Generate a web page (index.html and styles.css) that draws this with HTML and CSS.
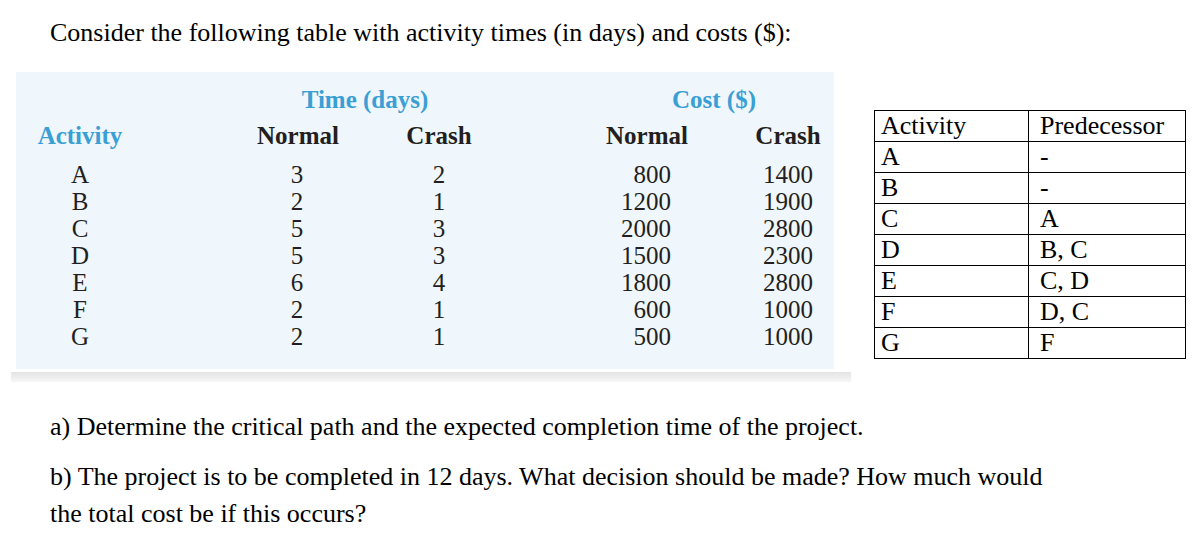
FILE: index.html
```html
<!DOCTYPE html>
<html lang="en">
<head>
<meta charset="utf-8">
<title>Activity times and costs</title>
<link rel="stylesheet" href="styles.css">
</head>
<body>
<main class="page">
  <p class="intro">Consider the following table with activity times (in days) and costs ($):</p>

  <div class="row">
    <figure class="figure">
      <div class="panel">
        <div class="grid groups">
          <div class="group g-time">Time (days)</div>
          <div class="group g-cost">Cost ($)</div>
        </div>
        <div class="grid heads">
          <div class="head blue c1">Activity</div>
          <div class="head c2">Normal</div>
          <div class="head c3">Crash</div>
          <div class="head c4">Normal</div>
          <div class="head c5">Crash</div>
        </div>
        <div class="grid body">
          <div class="cell c1">A</div><div class="cell c2">3</div><div class="cell c3">2</div><div class="cell num c4">800</div><div class="cell num c5">1400</div>
          <div class="cell c1">B</div><div class="cell c2">2</div><div class="cell c3">1</div><div class="cell num c4">1200</div><div class="cell num c5">1900</div>
          <div class="cell c1">C</div><div class="cell c2">5</div><div class="cell c3">3</div><div class="cell num c4">2000</div><div class="cell num c5">2800</div>
          <div class="cell c1">D</div><div class="cell c2">5</div><div class="cell c3">3</div><div class="cell num c4">1500</div><div class="cell num c5">2300</div>
          <div class="cell c1">E</div><div class="cell c2">6</div><div class="cell c3">4</div><div class="cell num c4">1800</div><div class="cell num c5">2800</div>
          <div class="cell c1">F</div><div class="cell c2">2</div><div class="cell c3">1</div><div class="cell num c4">600</div><div class="cell num c5">1000</div>
          <div class="cell c1">G</div><div class="cell c2">2</div><div class="cell c3">1</div><div class="cell num c4">500</div><div class="cell num c5">1000</div>
        </div>
      </div>
      <div class="shadow"></div>
    </figure>

    <table class="pred">
      <colgroup><col class="pc1"><col class="pc2"></colgroup>
      <tr><td>Activity</td><td class="p2">Predecessor</td></tr>
      <tr><td>A</td><td class="p2">-</td></tr>
      <tr><td>B</td><td class="p2">-</td></tr>
      <tr><td>C</td><td class="p2">A</td></tr>
      <tr><td>D</td><td class="p2">B, C</td></tr>
      <tr><td>E</td><td class="p2">C, D</td></tr>
      <tr><td>F</td><td class="p2">D, C</td></tr>
      <tr><td>G</td><td class="p2">F</td></tr>
    </table>
  </div>

  <p class="q qa">a) Determine the critical path and the expected completion time of the project.</p>
  <p class="q qb">b) The project is to be completed in 12 days. What decision should be made? How much would the total cost be if this occurs?</p>
</main>
</body>
</html>
```

FILE: styles.css
```css
html, body {
  margin: 0;
  padding: 0;
  background: #ffffff;
}

body {
  font-family: "Liberation Serif", "Times New Roman", serif;
  color: #000;
}

.page {
  width: 1197px;
  height: 538px;
  overflow: hidden;
}

.intro {
  margin: 18px 0 0 50px;
  font-size: 26px;
  line-height: 30px;
}

.row {
  display: flex;
  align-items: flex-start;
  margin-top: 24px;
}

.figure {
  margin: 0 0 0 11px;
  width: 840px;
}

.panel {
  margin-left: 5px;
  width: 818px;
  height: 297px;
  box-sizing: border-box;
  padding-top: 14px;
  background: #eff6fc;
}

.shadow {
  margin-top: 3px;
  height: 10px;
  background: linear-gradient(#e4e4e4, #f6f6f6);
}

.grid {
  display: grid;
  grid-template-columns: 128px 113px 80px 62px 80px 127px 80px 62px 80px;
  grid-auto-rows: 27px;
  font-size: 25px;
  line-height: 27px;
  color: #231f20;
}

.heads { margin-top: 9px; }
.body { margin-top: 12px; }

.group {
  font-weight: bold;
  color: #3a9fd4;
  text-align: center;
  white-space: nowrap;
}

.g-time { grid-column: 3 / 6; padding-right: 6px; }
.g-cost { grid-column: 7 / 10; padding-right: 6px; }

.head {
  font-weight: bold;
  text-align: center;
  white-space: nowrap;
}

.blue { color: #3a9fd4; }

.c1 { grid-column: 1; }
.c2 { grid-column: 3; }
.c3 { grid-column: 5; }
.c4 { grid-column: 7; }
.c5 { grid-column: 9; }

.cell {
  text-align: center;
}

.cell.num {
  text-align: right;
  padding-right: 15px;
}

.pred {
  margin: 38px 0 0 23px;
  border-collapse: collapse;
  table-layout: fixed;
  width: 311px;
  font-size: 26px;
  line-height: 29px;
}

.pc1 { width: 154px; }
.pc2 { width: 157px; }

.pred td {
  border: 1px solid #000;
  padding: 0 0 1px 6px;
  vertical-align: top;
  white-space: nowrap;
}

.pred td.p2 {
  padding-left: 11px;
}

.q {
  margin: 0 0 0 50px;
  width: 1010px;
  font-size: 26px;
  line-height: 37px;
}

.qa { margin-top: 26px; }
.qb { margin-top: 13px; }
```
